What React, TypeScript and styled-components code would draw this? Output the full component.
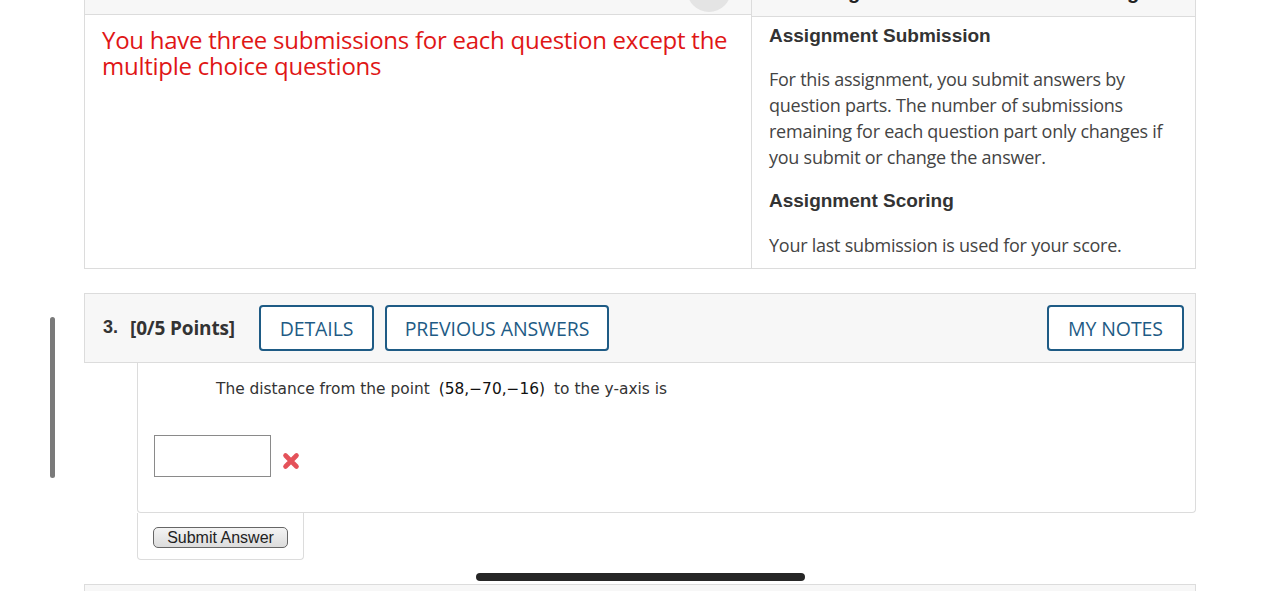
import React from "react";
import styled, { createGlobalStyle } from "styled-components";

const Global = createGlobalStyle`
  html, body { margin: 0; padding: 0; background: #fff; overflow: hidden; }
  body { font-family: "Open Sans", "Liberation Sans", sans-serif; }
  * { box-sizing: border-box; }
`;

const Page = styled.div`
  margin-top: -40px;
  padding: 0 84px;
  display: flex;
  flex-direction: column;
`;

const TopCard = styled.section`
  display: grid;
  grid-template-columns: 666px 1fr;
  border: 1px solid #dcdcdc;
  border-top: none;
`;

const Column = styled.div<{ $divider?: boolean }>`
  display: flex;
  flex-direction: column;
  border-left: ${(p) => (p.$divider ? "1px solid #dcdcdc" : "none")};
`;

const ColHeader = styled.div<{ $h: number }>`
  height: ${(p) => p.$h}px;
  background: #f7f7f7;
  border-bottom: 1px solid #dcdcdc;
  display: flex;
  align-items: center;
  justify-content: flex-end;
  padding: 0 20px 0 18px;
  overflow: hidden;
`;

const CircleBtn = styled.div`
  width: 44px;
  height: 44px;
  border-radius: 50%;
  background: #e4e4e4;
  margin-top: 6px;
`;

const CutHeading = styled.div`
  width: 100%;
  text-align: center;
  font-family: "Liberation Sans", Arial, sans-serif;
  font-weight: bold;
  font-size: 20px;
  line-height: 24px;
  color: #222;
  padding-top: 8px;
`;

const LeftBody = styled.div`
  padding: 12px 18px 0 17px;
  min-height: 253px;
`;

const RedNote = styled.p`
  margin: 0;
  color: #e01616;
  font-family: "Open Sans", sans-serif;
  font-size: 24px;
  line-height: 26px;
  letter-spacing: -0.25px;
`;

const RightBody = styled.div`
  padding: 5px 18px 8px 17px;
`;

const InfoHeading = styled.h3`
  margin: 0;
  font-family: "Liberation Sans", Arial, sans-serif;
  font-weight: bold;
  font-size: 19px;
  line-height: 28px;
  color: #333;
`;

const InfoText = styled.p<{ $mt: number; $mb: number }>`
  margin: ${(p) => p.$mt}px 0 ${(p) => p.$mb}px 0;
  font-family: "Open Sans", sans-serif;
  font-size: 18px;
  line-height: 26px;
  letter-spacing: -0.25px;
  color: #444;
`;

const QuestionHeader = styled.div`
  margin-top: 24px;
  height: 70px;
  background: #f7f7f7;
  border: 1px solid #dcdcdc;
  display: flex;
  align-items: center;
  padding: 0 11px 0 18px;
  gap: 11px;
`;

const QNum = styled.span`
  font-family: "Liberation Sans", Arial, sans-serif;
  font-weight: bold;
  font-size: 18px;
  color: #333;
  margin-top: -2px;
  margin-right: 3px;
`;

const Points = styled.span`
  font-family: "Open Sans", sans-serif;
  font-weight: bold;
  font-size: 19px;
  color: #333;
  margin-left: -2px;
  margin-right: 13px;
  letter-spacing: -0.15px;
`;

const OutlineBtn = styled.button<{ $w: number }>`
  width: ${(p) => p.$w}px;
  height: 46px;
  border: 2px solid #1e5b85;
  border-radius: 4px;
  background: #fff;
  color: #1e5b85;
  font-family: "Open Sans", sans-serif;
  font-size: 19.5px;
  font-weight: 500;
  letter-spacing: -0.1px;
  padding: 0;
  cursor: pointer;
`;

const Spacer = styled.div`
  flex: 1;
`;

const QuestionBody = styled.div`
  margin-left: 53px;
  height: 150px;
  border: 1px solid #dcdcdc;
  border-top: none;
  border-radius: 0 0 4px 4px;
  padding: 15px 0 0 16px;
  display: flex;
  flex-direction: column;
`;

const Prompt = styled.p`
  margin: 0 0 0 62px;
  font-family: "DejaVu Sans", Verdana, sans-serif;
  font-size: 15.4px;
  line-height: 22px;
  color: #333;
`;

const MathSpan = styled.span`
  color: #111;
  margin: 0 9px;
`;

const AnswerRow = styled.div`
  margin-top: 35px;
  display: flex;
  align-items: center;
  gap: 10px;
`;

const AnswerInput = styled.input`
  width: 117px;
  height: 42px;
  border: 1px solid #8a8a8a;
  background: #fff;
  padding: 0 4px;
  font-size: 16px;
`;

const WrongMark = styled.svg`
  width: 20px;
  height: 20px;
  margin-top: 10px;
`;

const SubmitBox = styled.div`
  margin-left: 53px;
  width: 167px;
  height: 47px;
  border: 1px solid #dcdcdc;
  border-top: none;
  border-radius: 0 0 4px 4px;
  padding: 14px 0 0 15px;
  display: flex;
  align-items: flex-start;
`;

const SubmitButton = styled.button`
  width: 135px;
  height: 21px;
  border: 1px solid #666;
  border-radius: 5px;
  background: linear-gradient(#f4f4f4, #dcdcdc);
  font-family: "Liberation Sans", Arial, sans-serif;
  font-size: 16px;
  color: #222;
  padding: 0;
  line-height: 18px;
`;

const NextCard = styled.div`
  margin-top: 24px;
  height: 40px;
  background: #f7f7f7;
  border: 1px solid #dcdcdc;
`;

const ScrollThumb = styled.div`
  position: fixed;
  left: 50px;
  top: 317px;
  width: 5px;
  height: 161px;
  border-radius: 3px;
  background: #7a7a7a;
`;

const HomeIndicator = styled.div`
  position: fixed;
  left: 476px;
  top: 573px;
  width: 329px;
  height: 8px;
  border-radius: 4px;
  background: #262626;
`;

export default function App() {
  return (
    <>
      <Global />
      <Page>
        <TopCard>
          <Column>
            <ColHeader $h={55}>
              <CircleBtn />
            </ColHeader>
            <LeftBody>
              <RedNote>
                You have three submissions for each question except the multiple choice questions
              </RedNote>
            </LeftBody>
          </Column>
          <Column $divider>
            <ColHeader $h={57}>
              <CutHeading>Assignment Submission &amp; Scoring</CutHeading>
            </ColHeader>
            <RightBody>
              <InfoHeading>Assignment Submission</InfoHeading>
              <InfoText $mt={16} $mb={17}>
                For this assignment, you submit answers by question parts. The number of submissions
                remaining for each question part only changes if you submit or change the answer.
              </InfoText>
              <InfoHeading>Assignment Scoring</InfoHeading>
              <InfoText $mt={17} $mb={0}>
                Your last submission is used for your score.
              </InfoText>
            </RightBody>
          </Column>
        </TopCard>

        <QuestionHeader>
          <QNum>3.</QNum>
          <Points>[0/5 Points]</Points>
          <OutlineBtn $w={115}>DETAILS</OutlineBtn>
          <OutlineBtn $w={224}>PREVIOUS ANSWERS</OutlineBtn>
          <Spacer />
          <OutlineBtn $w={137}>MY NOTES</OutlineBtn>
        </QuestionHeader>

        <QuestionBody>
          <Prompt>
            The distance from the point
            <MathSpan>(58,−70,−16)</MathSpan>
            to the y-axis is
          </Prompt>
          <AnswerRow>
            <AnswerInput type="text" />
            <WrongMark viewBox="0 0 20 20">
              <path
                d="M4.5 4.5 L15.5 15.5 M15.5 4.5 L4.5 15.5"
                stroke="#e4525a"
                strokeWidth="4.6"
                strokeLinecap="round"
              />
            </WrongMark>
          </AnswerRow>
        </QuestionBody>
        <SubmitBox>
          <SubmitButton>Submit Answer</SubmitButton>
        </SubmitBox>

        <NextCard />
      </Page>
      <ScrollThumb />
      <HomeIndicator />
    </>
  );
}
